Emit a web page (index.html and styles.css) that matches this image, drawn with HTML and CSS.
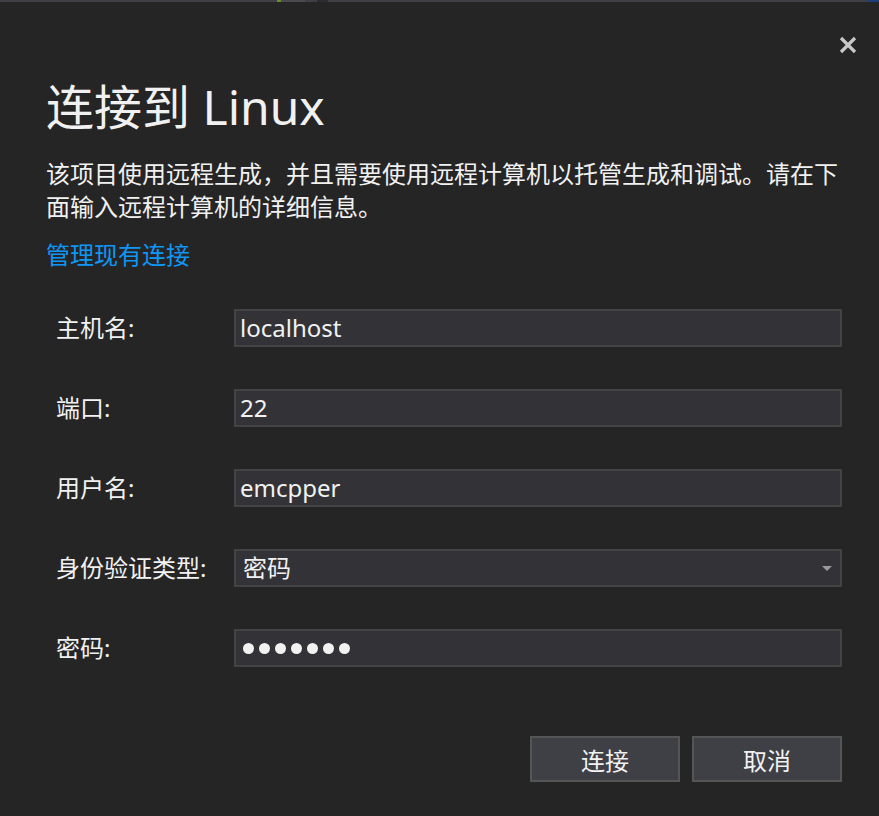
FILE: index.html
```html
<!DOCTYPE html>
<html lang="zh-CN">
<head>
<meta charset="utf-8">
<title>连接到 Linux</title>
<link rel="stylesheet" href="styles.css">
</head>
<body>
<div class="topbar">
  <span class="tb-green"></span><span class="tb-dark1"></span><span class="tb-dark2"></span><span class="tb-blue"></span>
</div>
<div class="dialog">
  <button class="close" aria-label="关闭">
    <svg width="18" height="18" viewBox="0 0 18 18"><path d="M2 2 L16 16 M16 2 L2 16" stroke="#c8c8c8" stroke-width="3.2" stroke-linecap="butt"/></svg>
  </button>
  <h1 class="title">连接到 Linux</h1>
  <p class="desc">该项目使用远程生成，并且需要使用远程计算机以托管生成和调试。请在下面输入远程计算机的详细信息。</p>
  <a class="link" href="#">管理现有连接</a>
  <div class="form">
    <div class="label">主机名:</div>
    <div class="field">localhost</div>
    <div class="label">端口:</div>
    <div class="field">22</div>
    <div class="label">用户名:</div>
    <div class="field">emcpper</div>
    <div class="label">身份验证类型:</div>
    <div class="field select">密码<span class="arrow"></span></div>
    <div class="label">密码:</div>
    <div class="field password" aria-label="密码"><span></span><span></span><span></span><span></span><span></span><span></span><span></span></div>
  </div>
  <div class="buttons">
    <button class="btn">连接</button>
    <button class="btn">取消</button>
  </div>
</div>
</body>
</html>
```
FILE: styles.css
```css
html, body {
  margin: 0;
  padding: 0;
  background: #252526;
  color: #f1f1f1;
  font-family: "Noto Sans", "Noto Sans CJK SC", sans-serif;
  height: 816px;
  overflow: hidden;
}
.topbar {
  height: 2px;
  background: #3f3f46;
  position: relative;
}
.topbar span {
  position: absolute;
  top: 0;
  height: 2px;
}
.tb-green { left: 277px; width: 4px; background: #6a8f2a; }
.tb-dark1 { left: 281px; width: 24px; background: #4a4a4f; }
.tb-dark2 { left: 317px; width: 11px; background: #2d2d30; }
.tb-blue { left: 868px; width: 11px; background: #1c3f7a; }
.dialog {
  position: relative;
  padding: 74px 37px 0 46px;
}
.close {
  position: absolute;
  top: 32px;
  right: 20px;
  width: 22px;
  height: 22px;
  padding: 0;
  border: none;
  background: transparent;
  display: flex;
  align-items: center;
  justify-content: center;
}
.title {
  margin: 0;
  font-size: 48px;
  line-height: 62px;
  font-weight: 400;
}
.desc {
  margin: 19px 0 0 0;
  font-size: 24px;
  line-height: 33px;
}
.link {
  display: block;
  margin-top: 15px;
  font-size: 24px;
  line-height: 33px;
  color: #0e97f7;
  text-decoration: none;
}
.form {
  margin-top: 38px;
  display: grid;
  grid-template-columns: 188px 1fr;
  row-gap: 42px;
  align-items: center;
}
.label {
  padding-left: 10px;
  font-size: 24px;
  line-height: 38px;
}
.field {
  height: 34px;
  border: 2px solid #434346;
  background: #333337;
  font-size: 24px;
  line-height: 34px;
  padding-left: 4px;
  display: flex;
  align-items: center;
}
.select {
  padding-left: 7px;
  position: relative;
}
.arrow {
  position: absolute;
  right: 8px;
  top: 15px;
  width: 0;
  height: 0;
  border-left: 5px solid transparent;
  border-right: 5px solid transparent;
  border-top: 5px solid #9a9a9a;
}
.password {
  padding-left: 7px;
  gap: 5px;
}
.password span {
  width: 11px;
  height: 11px;
  border-radius: 50%;
  background: #f1f1f1;
}
.buttons {
  margin-top: 69px;
  display: flex;
  justify-content: flex-end;
  gap: 12px;
}
.btn {
  width: 150px;
  height: 46px;
  background: #3f3f46;
  border: 2px solid #555555;
  color: #f1f1f1;
  font-family: "Noto Sans", "Noto Sans CJK SC", sans-serif;
  font-size: 24px;
  line-height: 42px;
  padding: 2px 0 0 0;
}
```
